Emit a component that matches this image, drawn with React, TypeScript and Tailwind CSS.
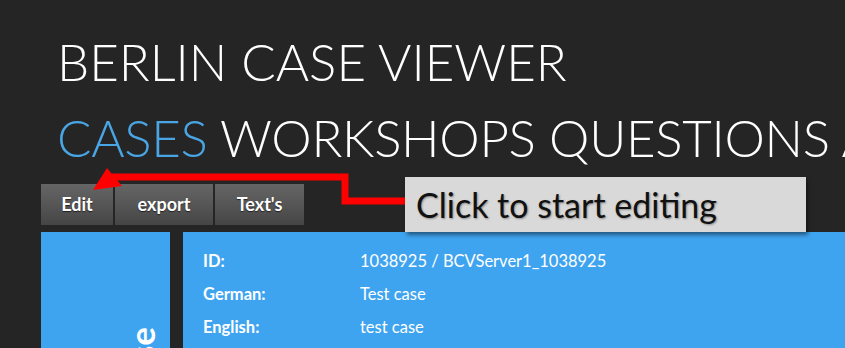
import React from "react";

const rows: [string, string][] = [
  ["ID:", "1038925 / BCVServer1_1038925"],
  ["German:", "Test case"],
  ["English:", "test case"],
];

export default function App() {
  return (
    <div className="relative w-[845px] h-[348px] overflow-hidden bg-[#252525] font-['Lato','Liberation_Sans',sans-serif]">
      <div className="pl-[57px] pt-[24px] text-white font-light whitespace-nowrap text-[51px] leading-[76px]">
        <div>BERLIN CASE VIEWER</div>
        <div className="tracking-[-0.3px]">
          <span className="text-[#4aa5e4]">CASES</span> WORKSHOPS QUESTIONS ADMIN
        </div>
      </div>

      <div className="mt-[8px] ml-[41px] flex gap-[2px] h-[41px]">
        {[
          ["Edit", "w-[72px]"],
          ["export", "w-[98px]"],
          ["Text's", "w-[89px]"],
        ].map(([label, w]) => (
          <div
            key={label}
            className={`${w} flex items-center justify-center bg-gradient-to-b from-[#656565] via-[#565656] to-[#454545] text-white font-bold text-[18px] [text-shadow:0_1px_1px_rgba(0,0,0,0.6)]`}
          >
            {label}
          </div>
        ))}
      </div>

      <div className="mt-[7px] flex gap-[13px] pl-[41px] h-[200px]">
        <div className="w-[129px] bg-[#3fa4ef] pt-[95px] pl-[80px]">
          <span className="inline-block [writing-mode:vertical-rl] rotate-180 text-white font-bold text-[35px] leading-[40px]">
            Case
          </span>
        </div>
        <div className="flex-1 bg-[#3fa4ef] pt-[13px] pl-[20px] text-white text-[16.5px]">
          {rows.map(([k, v]) => (
            <div key={k} className="grid grid-cols-[157px_1fr] leading-[33px]">
              <span className="font-bold">{k}</span>
              <span>{v}</span>
            </div>
          ))}
        </div>
      </div>

      <svg className="absolute left-0 top-0" width="845" height="348" viewBox="0 0 845 348">
        <path d="M406 201 H345 V177 H112" fill="none" stroke="#ff0000" strokeWidth="7" strokeLinejoin="miter" />
        <polygon points="93,190 107,168 122,186" fill="#ff0000" />
      </svg>

      <div className="absolute left-[405px] top-[177px] w-[401px] h-[55px] bg-[#d9d9d9] shadow-[2px_3px_4px_rgba(0,0,0,0.45)] pl-[11px] text-[34px] leading-[55px] text-[#111] [text-shadow:1px_1px_2px_rgba(0,0,0,0.35)] whitespace-nowrap">
        Click to start editing
      </div>
    </div>
  );
}
